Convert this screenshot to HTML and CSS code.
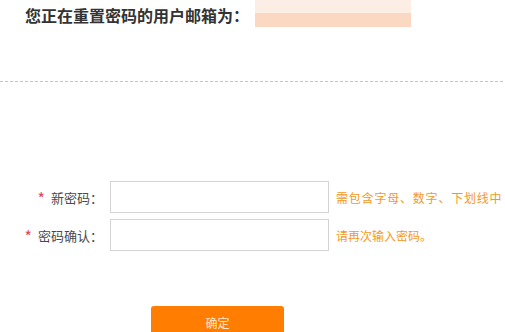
FILE: index.html
```html
<!DOCTYPE html>
<html lang="zh-CN">
<head>
<meta charset="utf-8">
<title>重置密码</title>
<link rel="stylesheet" href="styles.css">
</head>
<body>
<div class="page">
  <div class="header">
    <h1 class="title">您正在重置密码的用户邮箱为：</h1>
    <div class="email-blur" aria-hidden="true">
      <div class="blur-top"></div>
      <div class="blur-bottom"></div>
    </div>
  </div>
  <div class="divider"></div>
  <form class="form">
    <div class="row">
      <label class="label"><span class="star">*</span>新密码：</label>
      <input class="field" type="password">
      <span class="hint hint-wide">需包含字母、数字、下划线中</span>
    </div>
    <div class="row">
      <label class="label"><span class="star">*</span>密码确认：</label>
      <input class="field" type="password">
      <span class="hint">请再次输入密码。</span>
    </div>
    <div class="actions">
      <button class="submit" type="button">确定</button>
    </div>
  </form>
</div>
</body>
</html>
```

FILE: styles.css
```css
html, body {
  margin: 0;
  padding: 0;
  background: #fff;
}
body {
  font-family: "Noto Sans CJK SC", "Noto Sans", sans-serif;
  color: #444;
  overflow: hidden;
  width: 505px;
  height: 332px;
}
.page {
  width: 505px;
  overflow: hidden;
}
.header {
  display: flex;
  align-items: flex-start;
  height: 27px;
  padding-left: 25px;
}
.title {
  margin: 5px 6px 0 0;
  font-size: 16px;
  line-height: 20px;
  font-weight: bold;
  color: #333;
  white-space: nowrap;
}
.email-blur {
  width: 156px;
  height: 27px;
  display: flex;
  flex-direction: column;
}
.blur-top {
  height: 13px;
  background: #fdeee5;
}
.blur-bottom {
  height: 14px;
  background: #fbd8c2;
}
.divider {
  margin-top: 54px;
  height: 1px;
  background: repeating-linear-gradient(to right, #c4c4c4 0 3px, transparent 3px 5px);
}
.form {
  margin: 99px 0 0 0;
}
.row {
  display: flex;
  align-items: center;
  height: 32px;
  margin-bottom: 6px;
  white-space: nowrap;
}
.label {
  flex: 0 0 103px;
  width: 103px;
  text-align: right;
  font-size: 13px;
  color: #4a4a4a;
  margin-right: 7px;
}
.star {
  color: #e6415f;
  margin-right: 6px;
  font-size: 16px;
  line-height: 12px;
  position: relative;
  top: 2px;
}
.field {
  flex: 0 0 219px;
  box-sizing: border-box;
  width: 219px;
  height: 32px;
  margin: 0;
  padding: 0 6px;
  border: 1px solid #d4d4d4;
  background: #fff;
  outline: none;
}
.hint {
  flex: 0 0 auto;
  margin-left: 7px;
  font-size: 12px;
  color: #f39a1e;
}
.hint-wide {
  letter-spacing: 0.8px;
}
.actions {
  padding-left: 151px;
  padding-top: 49px;
}
.submit {
  width: 133px;
  height: 34px;
  border: none;
  border-radius: 3px;
  background: #ff7d00;
  color: #fde7d2;
  font-family: "Noto Sans CJK SC", sans-serif;
  font-size: 12px;
  line-height: 34px;
  padding: 0;
}
```
